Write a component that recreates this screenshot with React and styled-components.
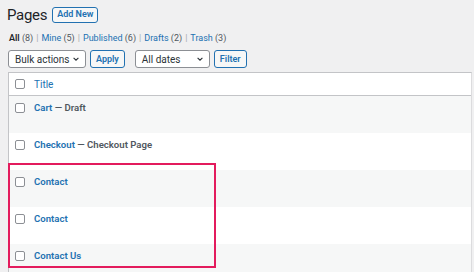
import React from "react";
import styled, { createGlobalStyle } from "styled-components";

const GlobalStyle = createGlobalStyle`
	body {
		margin: 0;
		background: #f0f0f1;
		font-family: Roboto, "Liberation Sans", sans-serif;
		color: #1d2327;
	}
`;

const pages = [
	{ title: "Cart", state: "Draft" },
	{ title: "Checkout", state: "Checkout Page" },
	{ title: "Contact" },
	{ title: "Contact" },
	{ title: "Contact Us" },
];

const filters = [
	{ label: "All", count: 8, current: true },
	{ label: "Mine", count: 5 },
	{ label: "Published", count: 6 },
	{ label: "Drafts", count: 2 },
	{ label: "Trash", count: 3 },
];

const Chevron = () => (
	<svg width="8" height="8" viewBox="0 0 10 10">
		<path d="M2 3.5 L5 6.5 L8 3.5" fill="none" stroke="#2c3338" strokeWidth="1.4" />
	</svg>
);

const App = () => {
	return (
		<Wrap>
			<GlobalStyle />
			<HeadRow>
				<Heading>Pages</Heading>
				<OutlineButton $small>Add New</OutlineButton>
			</HeadRow>

			<Filters>
				{filters.map((f, i) => (
					<React.Fragment key={f.label}>
						{i > 0 && <Sep>|</Sep>}
						<FilterLink $current={f.current}>{f.label}</FilterLink>{" "}
						<Count>({f.count})</Count>
					</React.Fragment>
				))}
			</Filters>

			<Actions>
				<Select $w={78}>
					Bulk actions <Chevron />
				</Select>
				<OutlineButton>Apply</OutlineButton>
				<Select $w={75} $gap>
					All dates <Chevron />
				</Select>
				<OutlineButton>Filter</OutlineButton>
			</Actions>

			<TableBox>
				<HeaderRow>
					<Check />
					<HeaderTitle>Title</HeaderTitle>
				</HeaderRow>
				{pages.map((p, i) => (
					<Row key={i} $odd={i % 2 === 0}>
						<Check />
						<RowTitle>
							<PageLink>{p.title}</PageLink>
							{p.state && <State> — {p.state}</State>}
						</RowTitle>
					</Row>
				))}
				<Highlight />
			</TableBox>
		</Wrap>
	);
};

const Wrap = styled.div`
	padding: 6px 2px 0 8px;
	height: 272px;
	box-sizing: border-box;
	overflow: hidden;
`;

const HeadRow = styled.div`
	display: flex;
	align-items: center;
	gap: 5px;
	margin-left: -1px;
	height: 17px;
`;

const Heading = styled.h1`
	margin: 0;
	font-size: 15px;
	font-weight: 400;
	letter-spacing: -0.3px;
	color: #1d2327;
	line-height: 17px;
	padding-top: 1px;
`;

const OutlineButton = styled.button`
	height: ${(p) => (p.$small ? "16px" : "18px")};
	padding: 0 ${(p) => (p.$small ? "4px" : "5px")};
	border: 1px solid #2271b1;
	border-radius: 3px;
	background: #f6f7f7;
	color: #2271b1;
	font-family: inherit;
	font-size: 9px;
	font-weight: 600;
	line-height: 1;
`;

const Filters = styled.div`
	margin-top: 8px;
	padding-left: 1px;
	height: 14px;
	line-height: 14px;
	font-size: 9px;
	white-space: nowrap;
`;

const FilterLink = styled.span`
	color: ${(p) => (p.$current ? "#1d2327" : "#2271b1")};
	font-weight: ${(p) => (p.$current ? 600 : 400)};
`;

const Count = styled.span`
	color: #50575e;
`;

const Sep = styled.span`
	color: #a7aaad;
	margin: 0 3px;
`;

const Actions = styled.div`
	display: flex;
	align-items: center;
	gap: 4px;
	margin-top: 5px;
	height: 18px;
`;

const Select = styled.div`
	box-sizing: border-box;
	width: ${(p) => p.$w}px;
	height: 18px;
	margin-left: ${(p) => (p.$gap ? "6px" : "0")};
	padding: 0 5px 0 6px;
	display: flex;
	align-items: center;
	justify-content: space-between;
	border: 1px solid #8c8f94;
	border-radius: 3px;
	background: #fff;
	color: #2c3338;
	font-size: 10px;
`;

const TableBox = styled.div`
	position: relative;
	margin-top: 4px;
	border: 1px solid #c3c4c7;
	border-right-color: #dcdcde;
	background: #fff;
`;

const HeaderRow = styled.div`
	display: flex;
	align-items: center;
	height: 22px;
	border-bottom: 1px solid #c3c4c7;
	background: #fff;
`;

const Row = styled.div`
	display: flex;
	align-items: flex-start;
	height: 37px;
	padding-top: 7px;
	box-sizing: border-box;
	background: ${(p) => (p.$odd ? "#f6f7f7" : "#fff")};
`;

const Check = styled.span`
	box-sizing: border-box;
	width: 10px;
	height: 10px;
	margin: 0 9px 0 6px;
	border: 1px solid #8c8f94;
	border-radius: 2px;
	background: #fff;
	flex-shrink: 0;
`;

const HeaderTitle = styled.span`
	color: #2271b1;
	font-size: 10px;
`;

const RowTitle = styled.div`
	font-size: 9.6px;
	font-weight: 600;
	line-height: 10px;
`;

const PageLink = styled.span`
	color: #2271b1;
`;

const State = styled.span`
	color: #50575e;
`;

const Highlight = styled.div`
	position: absolute;
	left: -1px;
	top: 90px;
	width: 208px;
	height: 105px;
	box-sizing: border-box;
	border: 2px solid #e31b5d;
	pointer-events: none;
`;

export default App;
